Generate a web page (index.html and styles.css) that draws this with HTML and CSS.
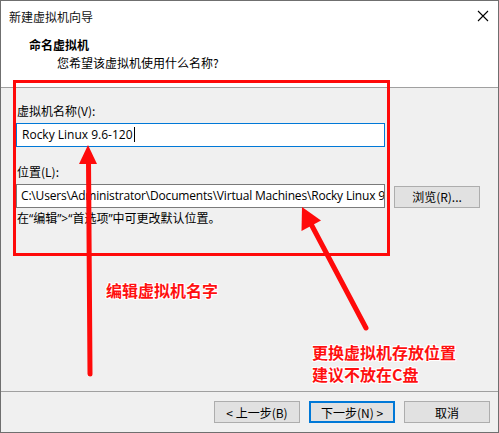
FILE: index.html
```html
<!DOCTYPE html>
<html lang="zh-CN">
<head>
  <meta charset="UTF-8">
  <meta name="viewport" content="width=device-width, initial-scale=1.0">
  <title>新建虚拟机向导</title>
  <link rel="stylesheet" href="styles.css">
</head>
<body>
  <div class="window">
    <div class="top">
      <div class="titlebar">
        <span class="title">新建虚拟机向导</span>
        <svg class="close" width="12" height="12" viewBox="0 0 12 12"><path d="M1 1L11 11M11 1L1 11" stroke="#000" stroke-width="1.1" fill="none"/></svg>
      </div>
      <div class="header">
        <div class="heading">命名虚拟机</div>
        <div class="subheading">您希望该虚拟机使用什么名称?</div>
      </div>
    </div>

    <div class="content">
      <label class="field-label">虚拟机名称(V):</label>
      <div class="input focused">Rocky Linux 9.6-120<span class="caret"></span></div>

      <label class="field-label second">位置(L):</label>
      <div class="row">
        <div class="input path">C:\Users\Administrator\Documents\Virtual Machines\Rocky Linux 9</div>
        <button class="btn browse">浏览(R)...</button>
      </div>
      <div class="hint">在“编辑”&gt;“首选项”中可更改默认位置。</div>
    </div>

    <div class="footer">
      <button class="btn">&lt; 上一步(B)</button>
      <button class="btn primary">下一步(N) &gt;</button>
      <button class="btn">取消</button>
    </div>

    <!-- annotations drawn over the dialog -->
    <svg class="marks" width="499" height="433" viewBox="0 0 499 433">
      <rect x="14.5" y="81.5" width="374" height="173" fill="none" stroke="#ff0a0a" stroke-width="3"/>
      <line x1="88.5" y1="160" x2="90" y2="374" stroke="#ff0a0a" stroke-width="5" stroke-linecap="round"/>
      <polygon points="88,145 79,164 97,164" fill="#ff0a0a"/>
      <line x1="311" y1="224" x2="366" y2="328" stroke="#ff0a0a" stroke-width="5" stroke-linecap="round"/>
      <polygon points="302,207 301.5,231 321,220.5" fill="#ff0a0a"/>
    </svg>
    <div class="note note-name">编辑虚拟机名字</div>
    <div class="note note-path">更换虚拟机存放位置<br>建议不放在C盘</div>
  </div>
</body>
</html>
```

FILE: styles.css
```css
* { box-sizing: border-box; }
body { margin: 0; font-family: "Noto Sans", "Noto Sans CJK SC", sans-serif; font-size: 12px; color: #000; background: #fff; }
.window { position: relative; width: 499px; height: 433px; border: 1px solid #6f6f6f; background: #f0f0f0; display: flex; flex-direction: column; overflow: hidden; }

.top { background: #fff; border-bottom: 1px solid #a0a0a0; height: 87px; }
.titlebar { height: 30px; display: flex; align-items: center; justify-content: space-between; padding: 0 9px 0 8px; }
.title { font-family: "Noto Sans CJK SC", sans-serif; font-size: 12px; color: #111; }
.header { padding: 5px 0 0 28px; }
.heading { font-family: "Noto Sans CJK SC", sans-serif; font-weight: bold; font-size: 12px; line-height: 18px; }
.subheading { font-family: "Noto Sans CJK SC", sans-serif; padding-left: 28px; line-height: 18px; }

.content { flex: 1; padding: 14px 0 0 15px; display: flex; flex-direction: column; }
.field-label { font-family: "Noto Sans CJK SC", sans-serif; line-height: 18px; height: 21px; padding-left: 1px; }
.field-label.second { margin-top: 16px; }
.input { width: 369px; height: 24px; background: #fff; border: 1px solid #7a7a7a; padding: 0 0 0 5px; line-height: 22px; white-space: nowrap; overflow: hidden; font-family: "Open Sans", "Noto Sans CJK SC", sans-serif; font-size: 12px; }
.input.focused { border-color: #0078d7; }
.caret { display: inline-block; width: 1px; height: 15px; background: #000; vertical-align: -3px; margin-left: 1px; }
.row { display: flex; align-items: center; gap: 9px; }
.input.path { padding-left: 4px; letter-spacing: -0.18px; }
.hint { font-family: "Open Sans", "Noto Sans CJK SC", sans-serif; margin-top: 2px; padding-left: 1px; line-height: 18px; }

.btn { width: 86px; height: 22px; background: #e1e1e1; border: 1px solid #adadad; font-family: "Noto Sans CJK SC", sans-serif; font-size: 12px; padding: 0; color: #000; }
.browse { margin-top: 1px; }
.footer { height: 41px; border-top: 1px solid #a0a0a0; display: flex; justify-content: flex-end; align-items: flex-start; gap: 9px; padding: 9px 8px 0 0; }
.btn.primary { border: 2px solid #0078d7; }

.marks { position: absolute; left: -1px; top: -1px; pointer-events: none; }
.note { position: absolute; font-family: "Noto Sans CJK SC", sans-serif; font-weight: bold; font-size: 16px; line-height: 22px; color: #ff1010;
  text-shadow: 1px 0 0 #fff, -1px 0 0 #fff, 0 1px 0 #fff, 0 -1px 0 #fff, 1px 1px 0 #fff, -1px -1px 0 #fff, 1px -1px 0 #fff, -1px 1px 0 #fff; }
.note-name { left: 105px; top: 278px; }
.note-path { left: 311px; top: 340px; }
```
